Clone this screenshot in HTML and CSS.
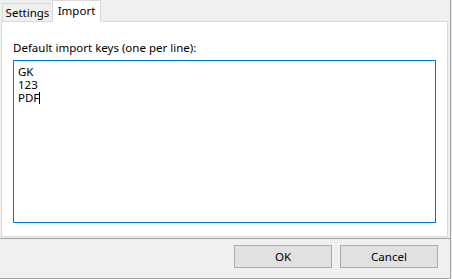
FILE: index.html
```html
<!DOCTYPE html>
<html>
<head>
<meta charset="utf-8">
<link rel="stylesheet" href="styles.css">
</head>
<body>
<div class="window">
  <div class="tabbar">
    <div class="tab">Settings</div>
    <div class="tab active">Import</div>
  </div>
  <div class="panel">
    <div class="label">Default import keys (one per line):</div>
    <div class="editor">
      <div class="text">GK
123
PDF<span class="caret"></span></div>
    </div>
  </div>
  <div class="footer">
    <div class="btn">OK</div>
    <div class="btn">Cancel</div>
  </div>
</div>
</body>
</html>
```
FILE: styles.css
```css
html, body {
  margin: 0;
  padding: 0;
  background: #f0f0f0;
  font-family: "Noto Sans", "Open Sans", sans-serif;
  font-size: 11.5px;
  color: #000;
}
.window {
  width: 451px;
  height: 279px;
  box-sizing: border-box;
  border-right: 1px solid #a0a0a0;
  border-bottom: 1px solid #a0a0a0;
  display: flex;
  flex-direction: column;
  background: #f0f0f0;
}
.tabbar {
  height: 21px;
  display: flex;
  align-items: flex-end;
  padding-left: 2px;
  position: relative;
  z-index: 1;
}
.tab {
  height: 18px;
  width: 51px;
  box-sizing: border-box;
  border: 1px solid #d9d9d9;
  border-bottom: none;
  background: #f0f0f0;
  line-height: 17px;
  text-align: center;
  white-space: nowrap;
}
.tab.active {
  background: #fff;
  height: 22px;
  width: 49px;
  margin-bottom: -1px;
  margin-left: -1px;
  line-height: 19px;
}
.panel {
  margin-left: 1px;
  width: 447px;
  height: 216px;
  box-sizing: border-box;
  background: #fff;
  border: 1px solid #d9d9d9;
  padding: 18px 0 0 11px;
}
.label {
  line-height: 16px;
  height: 20px;
}
.editor {
  width: 423px;
  height: 163px;
  box-sizing: border-box;
  border: 1px solid #0078d7;
  padding: 4px 4px;
}
.text {
  white-space: pre-line;
  line-height: 13px;
}
.caret {
  display: inline-block;
  width: 1px;
  height: 12px;
  background: #000;
  vertical-align: -2px;
}
.footer {
  flex: 1;
  border-top: 1px solid #a0a0a0;
  margin-top: 1px;
  display: flex;
  justify-content: flex-end;
  gap: 8px;
  padding: 6px 12px 0 0;
}
.btn {
  width: 98px;
  height: 23px;
  box-sizing: border-box;
  border: 1px solid #adadad;
  background: #e1e1e1;
  text-align: center;
  line-height: 21px;
}
```
